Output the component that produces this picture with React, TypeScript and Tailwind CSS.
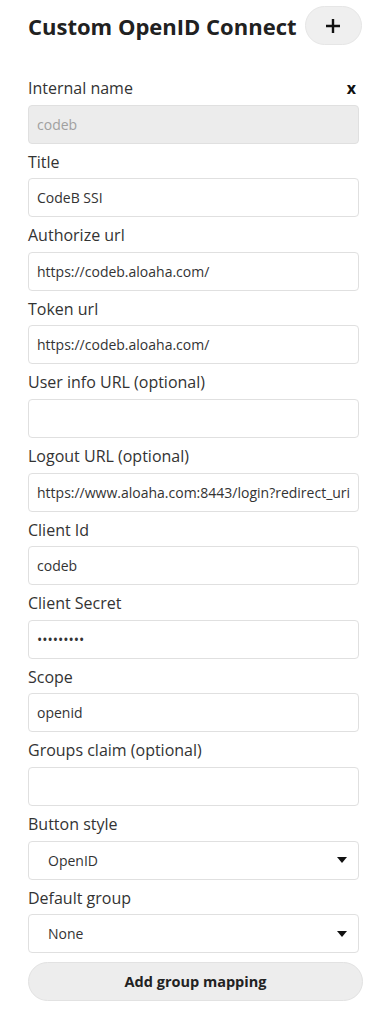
import React from "react";

const font = { fontFamily: '"Open Sans", "Noto Sans", sans-serif' };

function Label({ children, right }: { children: React.ReactNode; right?: React.ReactNode }) {
  return (
    <div className="flex h-[34.6px] items-start justify-between pt-[6px]">
      <span className="text-[16px] leading-6 text-[#333]">{children}</span>
      {right}
    </div>
  );
}

function Input({ value, disabled, type = "text" }: { value: string; disabled?: boolean; type?: string }) {
  return (
    <input
      readOnly
      type={type}
      value={value}
      style={font}
      className={
        "block h-[39px] w-full rounded-[4px] border border-[#e0e0e0] px-[8px] text-[14px] outline-none " +
        (disabled ? "bg-[#ececec] text-[#a0a0a0]" : "bg-white text-[#333]")
      }
    />
  );
}

function Select({ value }: { value: string }) {
  return (
    <div className="flex h-[39px] w-full items-center justify-between rounded-[4px] border border-[#e0e0e0] bg-white pl-[19px] pr-[11px]">
      <span className="text-[14px] text-[#333]">{value}</span>
      <svg width="10" height="6" viewBox="0 0 10 6">
        <path d="M0 0 L10 0 L5 6 Z" fill="#111" />
      </svg>
    </div>
  );
}

export default function App() {
  const fields: { label: string; value: string; type?: string }[] = [
    { label: "Title", value: "CodeB SSI" },
    { label: "Authorize url", value: "https://codeb.aloaha.com/" },
    { label: "Token url", value: "https://codeb.aloaha.com/" },
    { label: "User info URL (optional)", value: "" },
    { label: "Logout URL (optional)", value: "https://www.aloaha.com:8443/login?redirect_uri=https://codeb.aloaha.com/" },
    { label: "Client Id", value: "codeb" },
    { label: "Client Secret", value: "codebpass", type: "password" },
    { label: "Scope", value: "openid" },
    { label: "Groups claim (optional)", value: "" },
  ];
  return (
    <div style={font} className="w-[380px] bg-white pl-[28px] pr-[21px] text-[#333]">
      <div className="flex h-[70px] items-start pt-[6px]">
        <h1 className="mt-[6px] whitespace-nowrap text-[22px] font-bold leading-7 text-[#212121]">Custom OpenID Connect</h1>
        <button className="ml-[8px] flex h-[39px] w-[57px] shrink-0 items-center justify-center rounded-full border border-[#e6e6e6] bg-[#efefef]">
          <svg width="16" height="16" viewBox="0 0 16 16">
            <path d="M8 1 V15 M1 8 H15" stroke="#111" strokeWidth="2.4" />
          </svg>
        </button>
      </div>
      <Label right={<span className="mr-[3px] text-[16px] font-bold leading-6 text-[#111]">x</span>}>Internal name</Label>
      <Input value="codeb" disabled />
      {fields.map((f) => (
        <div key={f.label}>
          <Label>{f.label}</Label>
          <Input value={f.value} type={f.type} />
        </div>
      ))}
      <Label>Button style</Label>
      <Select value="OpenID" />
      <Label>Default group</Label>
      <Select value="None" />
      <button className="mt-[9px] flex h-[39px] w-[335px] items-center justify-center rounded-full border border-[#e2e2e2] bg-[#ededed] text-[14.5px] font-bold text-[#222]">
        Add group mapping
      </button>
    </div>
  );
}
